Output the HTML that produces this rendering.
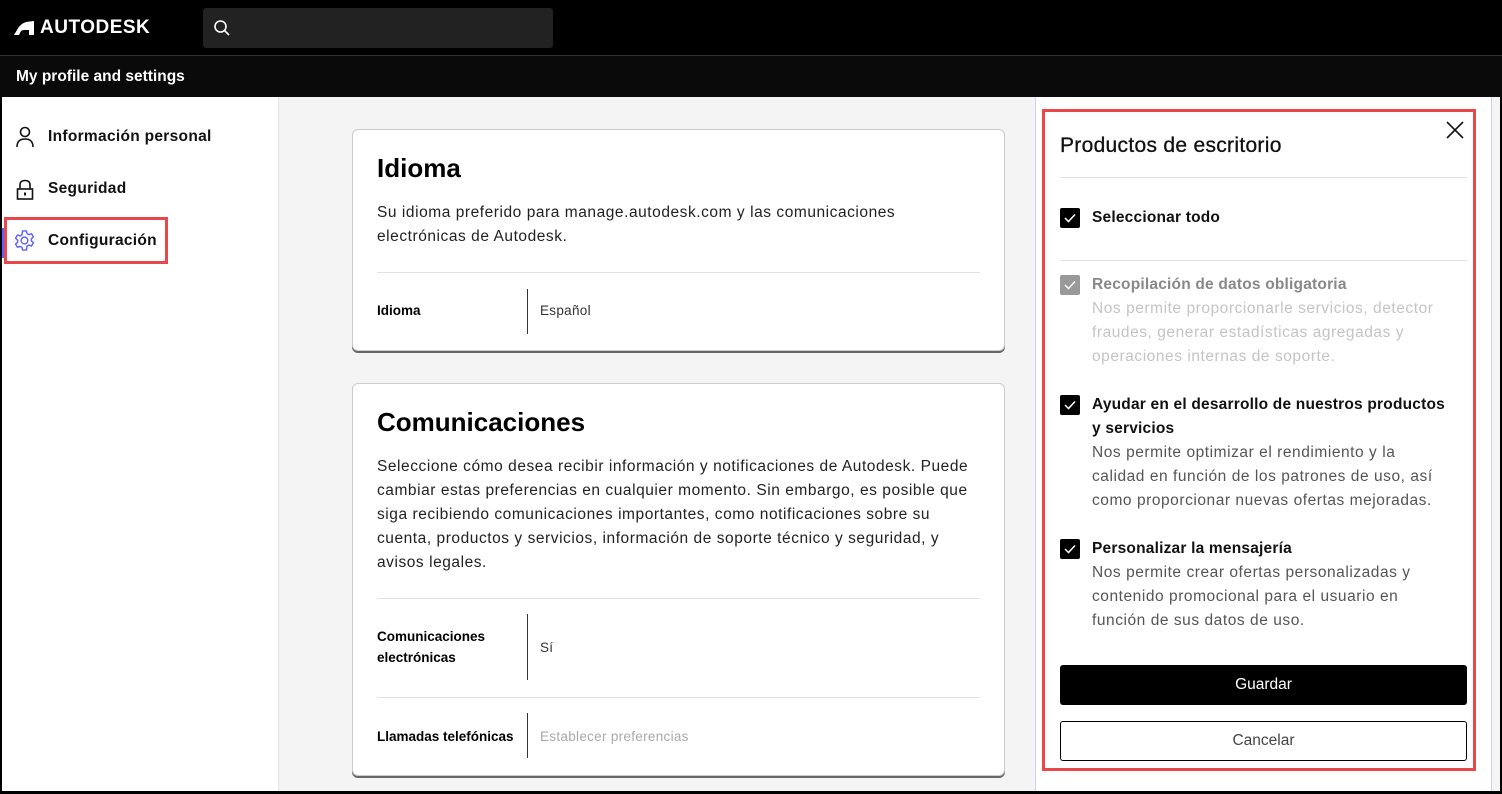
<!DOCTYPE html>
<html><head><meta charset="utf-8"><style>
*{box-sizing:border-box;margin:0;padding:0}
body{width:1502px;height:794px;overflow:hidden;font-family:"Liberation Sans",sans-serif;background:#000;position:relative;color:#000}
.abs{position:absolute}
.top{left:0;top:0;width:1502px;height:55px;background:#000}
.search{left:203px;top:8px;width:350px;height:40px;background:#222;border-radius:3px}
.sub{left:0;top:55px;width:1502px;height:42px;background:#0a0a0a;border-top:1px solid #333}
.sub span{position:absolute;left:16px;top:12px;color:#fff;font-size:15.5px;font-weight:bold}
.side{left:2px;top:97px;width:277px;height:694px;background:#fff;border-right:1px solid #e4e4e4}
.main{left:279px;top:97px;width:756px;height:694px;background:#f4f4f4}
.nav{position:absolute;left:48px;font-size:15.5px;font-weight:bold;color:#111;letter-spacing:0.3px}
.card{position:absolute;left:352px;width:653px;background:#fff;border:1px solid #ccc;border-radius:6px;box-shadow:0 2px 0 #666}
.card h2{position:absolute;left:24px;font-size:26px;font-weight:bold}
.card p{position:absolute;left:24px;width:620px;font-size:15.5px;line-height:24px;color:#222;white-space:nowrap;letter-spacing:0.55px}
.hr{position:absolute;left:24px;right:24px;height:1px;background:#e2e2e2}
.lbl{position:absolute;left:24px;font-size:13.5px;font-weight:bold;line-height:21px}
.vl{position:absolute;left:174px;width:1px;background:#333}
.val{position:absolute;left:187px;font-size:13.5px;color:#333;letter-spacing:0.3px}
.panel{left:1035px;top:97px;width:457px;height:694px;background:#fff;border-left:1px solid #d0d0f0;border-right:1px solid #d0d0f0}
.grey{left:1492px;top:97px;width:8px;height:694px;background:#f4f4f4}
.red{position:absolute;border:3px solid #e8474b}
.cb{position:absolute;left:1060px;width:20px;height:20px;background:#000;border-radius:2px}
.cb svg{position:absolute;left:4px;top:5px}
.pt{position:absolute;left:1092px;font-size:15.5px;font-weight:bold;color:#111;letter-spacing:0.2px}
.pd{position:absolute;left:1092px;width:370px;font-size:15.5px;line-height:24px;color:#555;white-space:nowrap;letter-spacing:0.55px}
</style></head><body>
<div class="abs top"></div>
<svg class="abs" style="left:14px;top:21px" width="20" height="14" viewBox="0 0 20 14"><path d="M0 14 L3 9 Q6 3 12 1 L20 0 L20 14 L15 14 L15 9 L10 9 Q7 9 6 12 L5 14Z" fill="#fff"/></svg>
<div class="abs" style="left:40px;top:17px;color:#fff;font-weight:bold;font-size:19px;letter-spacing:0.5px">AUTODESK</div>
<div class="abs search"></div>
<svg class="abs" style="left:213px;top:19px" width="18" height="18" viewBox="0 0 18 18"><circle cx="7.5" cy="7.5" r="5.5" stroke="#fff" stroke-width="1.6" fill="none"/><path d="M11.5 11.5 L16 16" stroke="#fff" stroke-width="1.6"/></svg>
<div class="abs sub"><span>My profile and settings</span></div>
<div class="abs side"></div>
<svg class="abs" style="left:15px;top:126px" width="20" height="22" viewBox="0 0 20 22"><circle cx="10" cy="6" r="4.5" stroke="#111" stroke-width="1.6" fill="none"/><path d="M2 21 Q2 13 10 13 Q18 13 18 21" stroke="#111" stroke-width="1.6" fill="none"/></svg>
<div class="nav" style="top:128px">Información personal</div>
<svg class="abs" style="left:16px;top:179px" width="18" height="22" viewBox="0 0 18 22"><path d="M4 10 V6 Q4 1.5 9 1.5 Q14 1.5 14 6 V10" stroke="#111" stroke-width="1.6" fill="none"/><rect x="1.5" y="10" width="15" height="10" stroke="#111" stroke-width="1.6" fill="none"/><rect x="8" y="13.5" width="2" height="3" fill="#111"/></svg>
<div class="nav" style="top:180px">Seguridad</div>
<div class="abs" style="left:2px;top:228px;width:3px;height:30px;background:#5f60ff"></div>
<svg class="abs" style="left:13px;top:229px" width="23" height="23" viewBox="0 0 24 24"><path d="M10 2h4l.6 2.8 2 1.1 2.7-1 2 3.4-2.1 1.9v2.3l2.1 1.9-2 3.4-2.7-1-2 1.1L14 22h-4l-.6-2.8-2-1.1-2.7 1-2-3.4 2.1-1.9V11.5L2.7 9.6l2-3.4 2.7 1 2-1.1z" stroke="#5f60ff" stroke-width="1.5" fill="none" stroke-linejoin="round"/><circle cx="12" cy="12" r="3.5" stroke="#5f60ff" stroke-width="1.5" fill="none"/></svg>
<div class="nav" style="top:232px">Configuración</div>
<div class="red" style="left:4px;top:217px;width:164px;height:47px"></div>
<div class="abs main"></div>
<div class="card" style="top:129px;height:222px">
<h2 style="top:23px">Idioma</h2>
<p style="top:71px">Su idioma preferido para manage.autodesk.com y las comunicaciones<br>electrónicas de Autodesk.</p>
<div class="hr" style="top:142px"></div>
<div class="lbl" style="top:170px">Idioma</div>
<div class="vl" style="top:159px;height:45px"></div>
<div class="val" style="top:173px">Español</div>
</div>
<div class="card" style="top:383px;height:393px">
<h2 style="top:23px">Comunicaciones</h2>
<p style="top:71px">Seleccione cómo desea recibir información y notificaciones de Autodesk. Puede<br>cambiar estas preferencias en cualquier momento. Sin embargo, es posible que<br>siga recibiendo comunicaciones importantes, como notificaciones sobre su<br>cuenta, productos y servicios, información de soporte técnico y seguridad, y<br>avisos legales.</p>
<div class="hr" style="top:214px"></div>
<div class="lbl" style="top:242px">Comunicaciones<br>electrónicas</div>
<div class="vl" style="top:230px;height:66px"></div>
<div class="val" style="top:256px">Sí</div>
<div class="hr" style="top:313px"></div>
<div class="lbl" style="top:342px">Llamadas telefónicas</div>
<div class="vl" style="top:329px;height:45px"></div>
<div class="val" style="top:345px;color:#aaa">Establecer preferencias</div>
</div>
<div class="abs panel"></div>
<div class="abs grey"></div>
<div class="abs" style="left:1060px;top:134px;font-size:21px;color:#111;-webkit-text-stroke:0.3px #111;letter-spacing:0.3px">Productos de escritorio</div>
<svg class="abs" style="left:1446px;top:121px" width="18" height="18" viewBox="0 0 18 18"><path d="M1 1L17 17M17 1L1 17" stroke="#111" stroke-width="1.6"/></svg>
<div class="abs" style="left:1060px;top:177px;width:407px;height:1px;background:#e2e2e2"></div>
<div class="cb" style="top:208px"><svg width="12" height="10" viewBox="0 0 12 10"><path d="M1 5l3.5 3.5L11 1.5" stroke="#fff" stroke-width="1.5" fill="none"/></svg></div>
<div class="pt" style="top:209px">Seleccionar todo</div>
<div class="abs" style="left:1060px;top:260px;width:407px;height:1px;background:#e2e2e2"></div>
<div class="cb" style="top:275px;background:#999"><svg width="12" height="10" viewBox="0 0 12 10"><path d="M1 5l3.5 3.5L11 1.5" stroke="#fff" stroke-width="1.5" fill="none"/></svg></div>
<div class="pt" style="top:276px;color:#888">Recopilación de datos obligatoria</div>
<div class="pd" style="top:297px;color:#c4c4c4">Nos permite proporcionarle servicios, detector<br>fraudes, generar estadísticas agregadas y<br>operaciones internas de soporte.</div>
<div class="cb" style="top:395px"><svg width="12" height="10" viewBox="0 0 12 10"><path d="M1 5l3.5 3.5L11 1.5" stroke="#fff" stroke-width="1.5" fill="none"/></svg></div>
<div class="pt" style="line-height:24px;top:393px">Ayudar en el desarrollo de nuestros productos<br>y servicios</div>
<div class="pd" style="top:441px">Nos permite optimizar el rendimiento y la<br>calidad en función de los patrones de uso, así<br>como proporcionar nuevas ofertas mejoradas.</div>
<div class="cb" style="top:539px"><svg width="12" height="10" viewBox="0 0 12 10"><path d="M1 5l3.5 3.5L11 1.5" stroke="#fff" stroke-width="1.5" fill="none"/></svg></div>
<div class="pt" style="top:540px">Personalizar la mensajería</div>
<div class="pd" style="top:561px">Nos permite crear ofertas personalizadas y<br>contenido promocional para el usuario en<br>función de sus datos de uso.</div>
<div class="abs" style="left:1060px;top:665px;width:407px;height:40px;background:#000;border-radius:3px;color:#fff;font-size:15.5px;text-align:center;line-height:40px">Guardar</div>
<div class="abs" style="left:1060px;top:721px;width:407px;height:40px;background:#fff;border:1px solid #000;border-radius:3px;color:#444;font-size:15.5px;text-align:center;line-height:38px">Cancelar</div>
<div class="red" style="left:1042px;top:109px;width:434px;height:662px"></div>
</body></html>
